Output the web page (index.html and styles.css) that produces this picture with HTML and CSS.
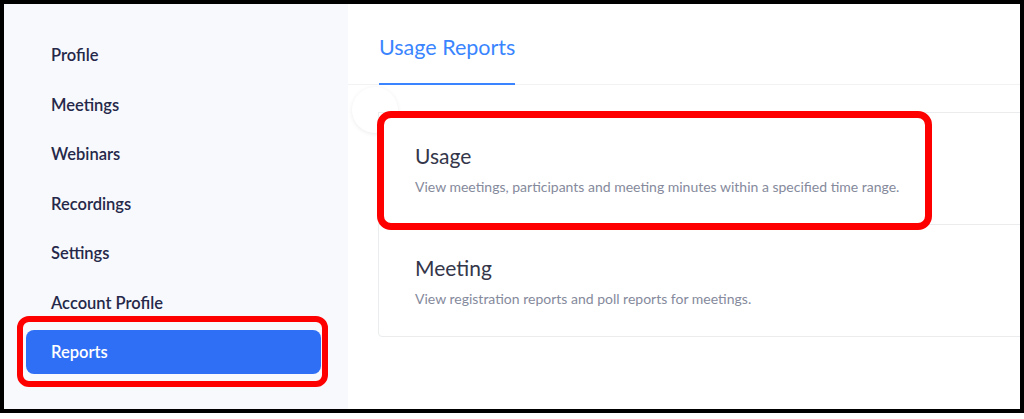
FILE: index.html
```html
<!DOCTYPE html>
<html>
<head>
<meta charset="utf-8">
<link rel="stylesheet" href="styles.css">
</head>
<body>
<div class="frame">
  <nav class="sidebar">
    <ul class="nav-list">
      <li class="nav-item">Profile</li>
      <li class="nav-item">Meetings</li>
      <li class="nav-item">Webinars</li>
      <li class="nav-item">Recordings</li>
      <li class="nav-item">Settings</li>
      <li class="nav-item">Account Profile</li>
      <li class="nav-item active">Reports<span class="ring ring-nav"></span></li>
    </ul>
  </nav>
  <main class="main">
    <div class="tabs">
      <div class="tab active">Usage Reports</div>
    </div>
    <div class="toggle"></div>
    <div class="cards">
      <div class="card">
        <h2 class="card-title">Usage</h2>
        <p class="card-desc">View meetings, participants and meeting minutes within a specified time range.</p>
        <span class="ring ring-card"></span>
      </div>
      <div class="card last">
        <h2 class="card-title">Meeting</h2>
        <p class="card-desc">View registration reports and poll reports for meetings.</p>
      </div>
    </div>
  </main>
</div>
</body>
</html>
```

FILE: styles.css
```css
* { box-sizing: border-box; }
html, body { margin: 0; padding: 0; background: #fff; }
body { font-family: Lato, "Noto Sans", sans-serif; }

.frame {
  width: 1024px;
  height: 413px;
  border: 4px solid #000;
  display: flex;
  overflow: hidden;
}

.sidebar {
  width: 344px;
  flex: 0 0 344px;
  background: #f8f9fc;
  padding-top: 29px;
}

.nav-list {
  list-style: none;
  margin: 0;
  padding: 0;
}

.nav-item {
  position: relative;
  height: 44px;
  margin: 0 27px 5.5px 22px;
  padding: 0 25px;
  display: flex;
  align-items: center;
  font-size: 16.5px;
  font-weight: 600;
  color: #252849;
  border-radius: 8px;
}

.nav-item.active {
  background: #2f6ff6;
  color: #fff;
}

.ring {
  position: absolute;
  border: 7px solid #ff0000;
  pointer-events: none;
  z-index: 5;
}

.ring-nav {
  left: -9px;
  top: -14px;
  width: 311px;
  height: 71px;
  border-width: 6px;
  border-radius: 12px;
}

.main {
  flex: 1;
  position: relative;
  background: #fff;
  overflow: hidden;
}

.tabs {
  display: flex;
  padding-left: 31px;
  border-bottom: 1px solid #f1f2f4;
}

.tab {
  padding: 31px 0 23px;
  width: 136px;
  font-size: 21.5px;
  line-height: 25px;
  white-space: nowrap;
  color: #3a85ff;
  border-bottom: 2px solid #3a85ff;
  margin-bottom: -1px;
}

.toggle {
  position: absolute;
  left: 4px;
  top: 83px;
  width: 46px;
  height: 46px;
  border-radius: 50%;
  background: #fff;
  box-shadow: 0 1px 4px rgba(0, 0, 0, 0.08);
}

.cards {
  position: relative;
  z-index: 2;
  margin: 27px -20px 0 30px;
}

.card {
  position: relative;
  height: 112px;
  padding: 30px 36px 0;
  background: #fff;
  border: 1px solid #ebecee;
  border-bottom: none;
}

.card.last {
  border-bottom: 1px solid #ebecee;
  border-radius: 0 0 0 4px;
  height: 113px;
}

.card-title {
  margin: 0;
  font-size: 21px;
  line-height: 25px;
  font-weight: 400;
  color: #34364a;
}

.card-desc {
  margin: 10px 0 0;
  font-size: 14px;
  line-height: 18px;
  color: #858a9c;
}

.ring-card {
  left: -2px;
  top: -2px;
  width: 555px;
  height: 119px;
  border-radius: 14px;
}
```
